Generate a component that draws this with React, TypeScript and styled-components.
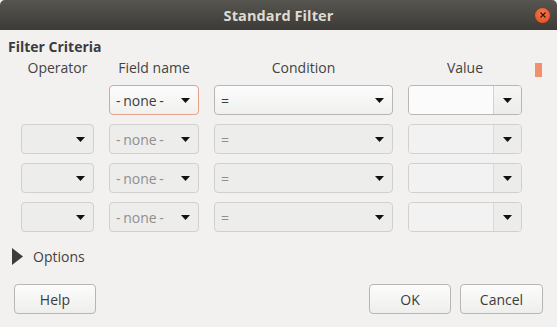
import React from "react";
import styled, { createGlobalStyle, css } from "styled-components";

const GlobalStyle = createGlobalStyle`
  html, body {
    margin: 0;
    padding: 0;
    background: #f2f1f0;
  }
  body {
    font-family: "Open Sans", "Noto Sans", "DejaVu Sans", sans-serif;
    font-size: 14px;
    color: #434343;
  }
  * { box-sizing: border-box; }
`;

const Window = styled.div`
  width: 557px;
  height: 327px;
  display: flex;
  flex-direction: column;
  background: #f2f1f0;
  overflow: hidden;
`;

const TitleBar = styled.div`
  height: 30px;
  flex: none;
  display: grid;
  grid-template-columns: 1fr auto 1fr;
  align-items: center;
  padding: 0 7px 0 7px;
  background: linear-gradient(#57554f, #3c3b37);
  border-radius: 5px 5px 0 0;
`;

const Title = styled.div`
  grid-column: 2;
  font-weight: 700;
  font-size: 14.5px;
  color: #dfdbd2;
  letter-spacing: 0.1px;
`;

const CloseButton = styled.div`
  grid-column: 3;
  justify-self: end;
  width: 15px;
  height: 15px;
  border-radius: 50%;
  background: radial-gradient(circle at 50% 35%, #f47a4e, #de4a1e);
  box-shadow: 0 0 0 0.5px #8a2e10;
  display: flex;
  align-items: center;
  justify-content: center;
`;

const Content = styled.div`
  flex: 1;
  display: flex;
  flex-direction: column;
  padding: 8px 14px 13px 8px;
`;

const SectionTitle = styled.div`
  font-weight: 700;
  line-height: 17px;
  height: 17px;
  color: #3c3c3c;
`;

const columns = css`
  display: grid;
  grid-template-columns: 73px 90px 179px 114px 7px;
  column-gap: 15px;
  padding-left: 13px;
`;

const HeaderGrid = styled.div`
  ${columns};
  margin-top: 3px;
  height: 20px;
  margin-bottom: 7px;
  align-items: center;
`;

const HeaderLabel = styled.div`
  text-align: center;
  line-height: 20px;
  white-space: nowrap;
`;

const ScrollMarker = styled.div`
  width: 7px;
  height: 14px;
  margin-left: -2px;
  align-self: start;
  margin-top: 5px;
  background: #f3906b;
`;

const RowsGrid = styled.div`
  ${columns};
  grid-auto-rows: 30px;
  row-gap: 9px;
`;

const Combo = styled.div<{ $disabled?: boolean; $focused?: boolean; $col: number }>`
  grid-column: ${(p) => p.$col};
  display: flex;
  align-items: center;
  justify-content: space-between;
  padding: 0 8px 0 6px;
  border-radius: 4px;
  border: 1px solid
    ${(p) => (p.$focused ? "#e4a38b" : p.$disabled ? "#d0d0ce" : "#b6b6b3")};
  background: ${(p) =>
    p.$disabled ? "#ededec" : "linear-gradient(#fcfcfc, #f0f0ef)"};
  color: ${(p) => (p.$disabled ? "#8f8f8f" : "#3c3c3c")};
  white-space: nowrap;
`;

const ComboText = styled.span`
  font-size: 14px;
  word-spacing: -1px;
`;

const ValueCombo = styled.div<{ $disabled?: boolean }>`
  grid-column: 4;
  display: flex;
  border-radius: 4px;
  border: 1px solid ${(p) => (p.$disabled ? "#d0d0ce" : "#b6b6b3")};
  overflow: hidden;
`;

const ValueEntry = styled.div<{ $disabled?: boolean }>`
  flex: 1;
  background: ${(p) => (p.$disabled ? "#f2f2f2" : "#fbfbfb")};
`;

const ValueButton = styled.div<{ $disabled?: boolean }>`
  width: 28px;
  display: flex;
  align-items: center;
  justify-content: center;
  border-left: 1px solid ${(p) => (p.$disabled ? "#dadad8" : "#d2d2d0")};
  background: ${(p) =>
    p.$disabled ? "#ececeb" : "linear-gradient(#f6f6f5, #ececeb)"};
`;

const OptionsRow = styled.div`
  display: flex;
  align-items: center;
  gap: 10px;
  margin-top: 14px;
  padding-left: 4px;
  height: 20px;
`;

const ButtonBar = styled.div`
  display: flex;
  gap: 9px;
  margin-top: 18px;
  padding-left: 6px;
`;

const Spacer = styled.div`
  flex: 1;
`;

const PushButton = styled.button<{ $wide?: boolean }>`
  width: ${(p) => (p.$wide ? 83 : 82)}px;
  height: 30px;
  font-family: inherit;
  font-size: 14px;
  color: #3c3c3c;
  border: 1px solid #b6b6b3;
  border-radius: 4px;
  background: linear-gradient(#fcfcfc, #eeeeec);
  padding: 0;
`;

const Arrow = () => (
  <svg width="9" height="5" viewBox="0 0 9 5">
    <path d="M0 0 H9 L4.5 5 Z" fill="#111" />
  </svg>
);

const Expander = () => (
  <svg width="11" height="17" viewBox="0 0 11 17">
    <path d="M0 0 L11 8.5 L0 17 Z" fill="#3c3c3c" />
  </svg>
);

const CloseGlyph = () => (
  <svg width="6" height="6" viewBox="0 0 6 6">
    <path d="M0.5 0.5 L5.5 5.5 M5.5 0.5 L0.5 5.5" stroke="#3b1608" strokeWidth="1.2" />
  </svg>
);

type RowProps = { first?: boolean };

const FilterRow: React.FC<RowProps> = ({ first }) => (
  <>
    {!first && (
      <Combo $col={1} $disabled>
        <span />
        <Arrow />
      </Combo>
    )}
    <Combo $col={2} $disabled={!first} $focused={first}>
      <ComboText>- none -</ComboText>
      <Arrow />
    </Combo>
    <Combo $col={3} $disabled={!first}>
      <ComboText>=</ComboText>
      <Arrow />
    </Combo>
    <ValueCombo $disabled={!first}>
      <ValueEntry $disabled={!first} />
      <ValueButton $disabled={!first}>
        <Arrow />
      </ValueButton>
    </ValueCombo>
  </>
);

export default function App() {
  return (
    <>
      <GlobalStyle />
      <Window>
        <TitleBar>
          <Title>Standard Filter</Title>
          <CloseButton>
            <CloseGlyph />
          </CloseButton>
        </TitleBar>
        <Content>
          <SectionTitle>Filter Criteria</SectionTitle>
          <HeaderGrid>
            <HeaderLabel>Operator</HeaderLabel>
            <HeaderLabel>Field name</HeaderLabel>
            <HeaderLabel>Condition</HeaderLabel>
            <HeaderLabel>Value</HeaderLabel>
            <ScrollMarker />
          </HeaderGrid>
          <RowsGrid>
            <FilterRow first />
            <FilterRow />
            <FilterRow />
            <FilterRow />
          </RowsGrid>
          <OptionsRow>
            <Expander />
            <span>Options</span>
          </OptionsRow>
          <ButtonBar>
            <PushButton>Help</PushButton>
            <Spacer />
            <PushButton>OK</PushButton>
            <PushButton $wide>Cancel</PushButton>
          </ButtonBar>
        </Content>
      </Window>
    </>
  );
}
